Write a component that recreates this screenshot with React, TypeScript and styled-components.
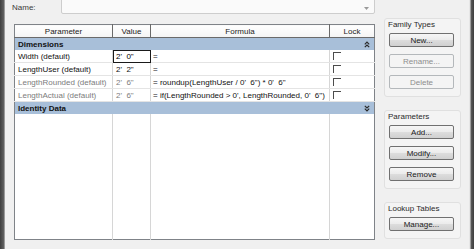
import React from "react";
import styled, { createGlobalStyle } from "styled-components";

// Type definitions
interface ParamRow {
  name: string;
  value: string;
  formula: string;
  inactive?: boolean;
  editing?: boolean;
}

interface ButtonSpec {
  label: string;
  disabled?: boolean;
}

interface GroupSpec {
  title: string;
  buttons: ButtonSpec[];
}

const dimensions: ParamRow[] = [
  { name: "Width (default)", value: "2'  0\"", formula: "=", editing: true },
  { name: "LengthUser (default)", value: "2'  2\"", formula: "=" },
  {
    name: "LengthRounded (default)",
    value: "2'  6\"",
    formula: "= roundup(LengthUser / 0'  6\") * 0'  6\"",
    inactive: true,
  },
  {
    name: "LengthActual (default)",
    value: "2'  6\"",
    formula: "= if(LengthRounded > 0', LengthRounded, 0'  6\")",
    inactive: true,
  },
];

const groups: GroupSpec[] = [
  {
    title: "Family Types",
    buttons: [
      { label: "New..." },
      { label: "Rename...", disabled: true },
      { label: "Delete", disabled: true },
    ],
  },
  {
    title: "Parameters",
    buttons: [{ label: "Add..." }, { label: "Modify..." }, { label: "Remove" }],
  },
  { title: "Lookup Tables", buttons: [{ label: "Manage..." }] },
];

// Styled components
const GlobalStyle = createGlobalStyle`
  html, body {
    margin: 0;
    padding: 0;
  }
  body {
    width: 474px;
    height: 249px;
    overflow: hidden;
    background: #f0f0f0;
    font-family: "Liberation Sans", Arial, sans-serif;
    font-size: 8px;
    color: #000;
  }
`;

const Window = styled.div`
  display: flex;
  width: 474px;
  height: 249px;
`;

const Frame = styled.div<{ $side: "left" | "right" }>`
  flex: none;
  width: 5px;
  background: ${(p) =>
    p.$side === "left"
      ? "linear-gradient(to right, #3f3f3f 0, #5f5f5f 70%, #b8b8b8 100%)"
      : "linear-gradient(to right, #e6e6e6 0, #e6e6e6 20%, #5a5a5a 40%, #3d3d3d 100%)"};
`;

const Dialog = styled.div`
  flex: 1;
  display: flex;
  gap: 9px;
  padding: 0 8px 0 7px;
  background: #f0f0f0;
`;

const MainColumn = styled.div`
  width: 363px;
  display: flex;
  flex-direction: column;
`;

const NameRow = styled.div`
  display: flex;
  align-items: center;
  height: 14px;
`;

const NameLabel = styled.span`
  width: 49px;
  color: #3a3a3a;
`;

const NameInput = styled.div`
  position: relative;
  flex: 1;
  height: 17px;
  margin-top: -4px;
  box-sizing: border-box;
  border: 1px solid #cdcdcd;
  border-radius: 2px;
  background: #fafafa;
`;

const DropArrow = styled.svg`
  position: absolute;
  right: 5px;
  top: 9px;
`;

const ParamTable = styled.table`
  margin: 10px 0 0 2px;
  width: 361px;
  height: 216px;
  border-collapse: collapse;
  table-layout: fixed;
  background: #fff;
  border: 1px solid #7f8388;
`;

const HeadCell = styled.th`
  height: 12px;
  padding: 0;
  font-weight: normal;
  text-align: center;
  color: #222;
  background: linear-gradient(#ffffff, #f4f4f4);
  border-right: 1px solid #6a6a6a;
  border-bottom: 1px solid #6a6a6a;
  &:last-child {
    border-right: none;
  }
`;

const GroupCell = styled.td`
  height: 12px;
  padding: 0 4px 0 3px;
  background: #a8bfd9;
  border-top: 1px solid #fff;
  font-weight: bold;
  color: #111;
`;

const GroupInner = styled.div`
  display: flex;
  align-items: center;
  justify-content: space-between;
`;

const Cell = styled.td<{ $muted?: boolean }>`
  height: 12px;
  padding: 0 3px;
  white-space: pre;
  overflow: hidden;
  color: ${(p) => (p.$muted ? "#7c7c7c" : "#111")};
  border-right: 1px solid #d6d6d6;
  border-bottom: 1px solid #e4e4e4;
  &:last-child {
    border-right: none;
  }
`;

const FormulaCell = styled(Cell)`
  padding-left: 2px;
  color: #111;
`;

const EditCell = styled.td`
  height: 12px;
  padding: 0 3px;
  white-space: pre;
  outline: 1px solid #1a1a1a;
  outline-offset: -1px;
  border-right: 1px solid #d6d6d6;
  border-bottom: 1px solid #e4e4e4;
`;

const FillCell = styled.td`
  padding: 0;
  border-right: 1px solid #d6d6d6;
  &:last-child {
    border-right: none;
  }
`;

const LockBox = styled.span`
  display: block;
  width: 8px;
  height: 8px;
  box-sizing: border-box;
  border-top: 1px solid #4c4c4c;
  border-left: 1px solid #4c4c4c;
`;

const SideColumn = styled.div`
  width: 77px;
  display: flex;
  flex-direction: column;
  gap: 13px;
  padding-top: 18px;
`;

const GroupBox = styled.div`
  display: flex;
  flex-direction: column;
  padding: 0 6px 7px 4px;
  border: 1px solid #e0e0e0;
  border-radius: 3px;
  background: #f4f4f4;
`;

const GroupTitle = styled.div`
  height: 10px;
  line-height: 10px;
  margin: 1px 0 3px -1px;
  color: #2a2a2a;
`;

const ButtonStack = styled.div`
  display: flex;
  flex-direction: column;
  gap: 7px;
`;

const Button = styled.button`
  height: 14px;
  padding: 0;
  font-family: inherit;
  font-size: 8px;
  color: #1a1a1a;
  border: 1px solid #707070;
  border-radius: 2px;
  background: linear-gradient(#f6f6f6 0%, #ebebeb 50%, #dddddd 51%, #d0d0d0 100%);
  &:disabled {
    color: #8d8d8d;
    border-color: #b4b8bb;
    background: #f4f4f4;
  }
`;

// Reusable components
const Chevrons: React.FC<{ dir: "up" | "down" }> = ({ dir }) => (
  <svg width="6" height="7" viewBox="0 0 6 7">
    <g
      fill="none"
      stroke="#2a2a2a"
      strokeWidth="1.2"
      transform={dir === "down" ? "rotate(180 3 3.5)" : undefined}
    >
      <path d="M0.8 3.3 L3 1.1 L5.2 3.3" />
      <path d="M0.8 6.2 L3 4 L5.2 6.2" />
    </g>
  </svg>
);

const GroupRow: React.FC<{ title: string; expanded: boolean }> = ({
  title,
  expanded,
}) => (
  <tr>
    <GroupCell colSpan={4}>
      <GroupInner>
        <span>{title}</span>
        <Chevrons dir={expanded ? "up" : "down"} />
      </GroupInner>
    </GroupCell>
  </tr>
);

const DataRow: React.FC<{ row: ParamRow }> = ({ row }) => (
  <tr>
    <Cell $muted={row.inactive}>{row.name}</Cell>
    {row.editing ? (
      <EditCell>{row.value}</EditCell>
    ) : (
      <Cell $muted={row.inactive}>{row.value}</Cell>
    )}
    <FormulaCell>{row.formula}</FormulaCell>
    <Cell>
      <LockBox />
    </Cell>
  </tr>
);

const App: React.FC = () => (
  <>
    <GlobalStyle />
    <Window>
      <Frame $side="left" />
      <Dialog>
        <MainColumn>
          <NameRow>
            <NameLabel>Name:</NameLabel>
            <NameInput>
              <DropArrow width="5" height="3" viewBox="0 0 5 3">
                <path d="M0 0 L5 0 L2.5 3 Z" fill="#9a9a9a" />
              </DropArrow>
            </NameInput>
          </NameRow>
          <ParamTable>
            <colgroup>
              <col style={{ width: 98 }} />
              <col style={{ width: 38 }} />
              <col style={{ width: 179 }} />
              <col />
            </colgroup>
            <thead>
              <tr>
                <HeadCell>Parameter</HeadCell>
                <HeadCell>Value</HeadCell>
                <HeadCell>Formula</HeadCell>
                <HeadCell>Lock</HeadCell>
              </tr>
            </thead>
            <tbody>
              <GroupRow title="Dimensions" expanded />
              {dimensions.map((row) => (
                <DataRow key={row.name} row={row} />
              ))}
              <GroupRow title="Identity Data" expanded={false} />
              <tr>
                <FillCell />
                <FillCell />
                <FillCell />
                <FillCell />
              </tr>
            </tbody>
          </ParamTable>
        </MainColumn>
        <SideColumn>
          {groups.map((g) => (
            <GroupBox key={g.title}>
              <GroupTitle>{g.title}</GroupTitle>
              <ButtonStack>
                {g.buttons.map((b) => (
                  <Button key={b.label} disabled={b.disabled}>
                    {b.label}
                  </Button>
                ))}
              </ButtonStack>
            </GroupBox>
          ))}
        </SideColumn>
      </Dialog>
      <Frame $side="right" />
    </Window>
  </>
);

export default App;
